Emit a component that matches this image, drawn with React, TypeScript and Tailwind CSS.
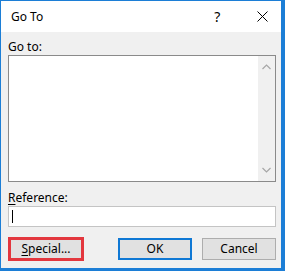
import React from "react";

export default function App() {
  const font = { fontFamily: '"Noto Sans", "Open Sans", Arial, sans-serif' };
  return (
    <div
      className="w-[285px] h-[271px] bg-[#1c7ed6] pl-[1px] pt-[1px] pr-[4px] pb-[3px]"
      style={font}
    >
      <div className="w-full h-full flex flex-col bg-[#f0f0f0] text-[12px] text-black">
        {/* title bar */}
        <div className="h-[31px] bg-white flex items-center shrink-0">
          <span className="pl-[10px] text-[12px]">Go To</span>
          <span className="ml-[171px] text-[14px] leading-none">?</span>
          <svg className="ml-[37px]" width="11" height="11" viewBox="0 0 11 11">
            <path d="M0.5 0.5 L10.5 10.5 M10.5 0.5 L0.5 10.5" stroke="#000" strokeWidth="1" />
          </svg>
        </div>
        {/* body */}
        <div className="flex-1 flex flex-col pl-[7px] pr-[5px]">
          <div className="pt-[7px] h-[23px] leading-[16px]">Go to:</div>
          <div className="h-[127px] border border-[#8a8a8a] bg-white flex">
            <div className="flex-1" />
            <div className="w-[17px] bg-[#f0f0f0] flex flex-col items-center justify-between py-[8px]">
              <svg width="9" height="6" viewBox="0 0 9 6">
                <path d="M0.5 5 L4.5 1 L8.5 5" stroke="#a6a6a6" strokeWidth="1.2" fill="none" />
              </svg>
              <svg width="9" height="6" viewBox="0 0 9 6">
                <path d="M0.5 1 L4.5 5 L8.5 1" stroke="#a6a6a6" strokeWidth="1.2" fill="none" />
              </svg>
            </div>
          </div>
          <div className="pt-[8px] h-[24px] leading-[16px]">
            <span className="underline underline-offset-[2px]">R</span>eference:
          </div>
          <div className="h-[21px] border border-[#c4c4c4] bg-white flex items-center pl-[3px]">
            <div className="w-[1px] h-[13px] bg-black" />
          </div>
          <div className="flex mt-[10px] h-[24px] items-center">
            <div className="w-[76px] h-[24px] border-[3px] border-[#e3373e] bg-[#e1e1e1] flex items-center justify-center">
              <span>
                <span className="underline underline-offset-[2px]">S</span>pecial...
              </span>
            </div>
            <div className="ml-[34px] w-[74px] h-[22px] border-2 border-[#0f78d4] bg-[#e1e1e1] flex items-center justify-center">
              OK
            </div>
            <div className="ml-[10px] w-[74px] h-[22px] border border-[#adadad] bg-[#e1e1e1] flex items-center justify-center">
              Cancel
            </div>
          </div>
        </div>
      </div>
    </div>
  );
}
